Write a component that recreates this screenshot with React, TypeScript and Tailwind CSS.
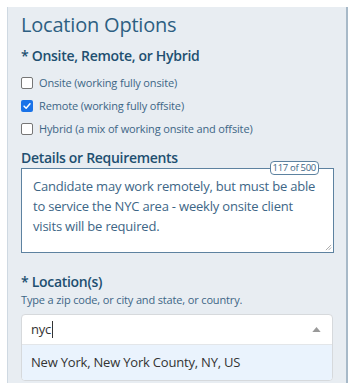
import { useState } from 'react'

const options = [
  { id: 'onsite', label: 'Onsite (working fully onsite)' },
  { id: 'remote', label: 'Remote (working fully offsite)' },
  { id: 'hybrid', label: 'Hybrid (a mix of working onsite and offsite)' },
]

const details =
  'Candidate may work remotely, but must be able to service the NYC area - weekly onsite client visits will be required.'

export default function App() {
  const [selected] = useState('remote')

  return (
    <div className="bg-white pt-[7px] pl-[7px] pr-[9px] h-[388px]" style={{ fontFamily: '"Open Sans", sans-serif' }}>
      <div className="bg-[#e8edf2] border-l border-[#cfd9e2] border-r-2 border-r-[#a7b9c8] h-[376px] pl-[13px] pr-[12px] pt-[4px]">
        <h2 className="text-[20px] leading-[28px] tracking-[-0.2px] text-[#2d5f82]">Location Options</h2>

        <div className="mt-[8px] text-[14px] leading-[18px] font-[650] tracking-[-0.3px] text-[#214f70]">* Onsite, Remote, or Hybrid</div>

        <div className="mt-[11px] flex flex-col gap-[9px]">
          {options.map((o) => (
            <label key={o.id} className="flex items-center gap-[6px] h-[14px]">
              {selected === o.id ? (
                <span className="w-[12px] h-[12px] rounded-[2px] bg-[#1a73e8] flex items-center justify-center">
                  <svg viewBox="0 0 12 12" className="w-[10px] h-[10px]">
                    <path d="M2.5 6.2 L5 8.6 L9.6 3.4" fill="none" stroke="white" strokeWidth="1.8" strokeLinecap="round" strokeLinejoin="round" />
                  </svg>
                </span>
              ) : (
                <span className="w-[12px] h-[12px] rounded-[2px] border border-[#767676] bg-white" />
              )}
              <span className="text-[11px] tracking-[-0.15px] text-[#3d6686]">{o.label}</span>
            </label>
          ))}
        </div>

        <div className="mt-[13px] text-[14px] leading-[18px] font-[650] tracking-[-0.3px] text-[#214f70]">Details or Requirements</div>

        <div className="relative mt-[1px]">
          <div className="bg-white border border-[#5d82a0] h-[85px] pl-[11px] pr-[10px] pt-[7px] text-[13px] leading-[20px] tracking-[-0.2px] text-[#3d6686]">
            {details}
          </div>
          <span className="absolute right-[15px] -top-[7px] bg-white border border-[#5d82a0] rounded-[4px] px-[2px] text-[9.5px] leading-[12px] tracking-[-0.3px] text-[#3d6686]">
            117 of 500
          </span>
          <svg viewBox="0 0 8 8" className="absolute right-[2px] bottom-[2px] w-[7px] h-[7px]">
            <path d="M7 1 L1 7 M7 4 L4 7" stroke="#8a8a8a" strokeWidth="0.8" />
          </svg>
        </div>

        <div className="mt-[20px] text-[14px] leading-[18px] font-[650] tracking-[-0.3px] text-[#214f70]">* Location(s)</div>
        <div className="mt-[1px] text-[11px] leading-[16px] tracking-[-0.15px] text-[#3d6686]">Type a zip code, or city and state, or country.</div>

        <div className="mt-[6px] mr-[1px] border border-[#d6d9dc] rounded-[4px] overflow-hidden bg-white">
          <div className="h-[30px] flex items-center pl-[9px] pr-[11px] border-b border-[#e3e6e9]">
            <span className="text-[13px] tracking-[-0.2px] text-[#333]">nyc</span>
            <span className="w-px h-[17px] bg-[#333] ml-[1px]" />
            <span className="flex-1" />
            <svg viewBox="0 0 10 6" className="w-[9px] h-[5px]">
              <path d="M0 6 L5 0 L10 6 Z" fill="#999" />
            </svg>
          </div>
          <div className="h-[35px] flex items-center pl-[9px] bg-[#eaf3fd] text-[13px] tracking-[-0.2px] text-[#333]">
            New York, New York County, NY, US
          </div>
        </div>
      </div>
    </div>
  )
}
